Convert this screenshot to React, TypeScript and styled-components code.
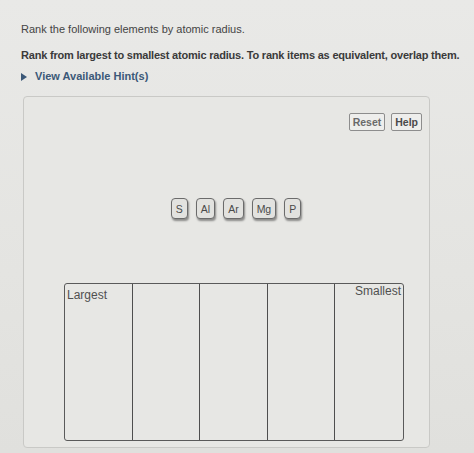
import React from "react";
import styled, { createGlobalStyle } from "styled-components";

const elements = ["S", "Al", "Ar", "Mg", "P"];
const columns = ["Largest", "", "", "", "Smallest"];

const GlobalStyle = createGlobalStyle`
  html, body {
    margin: 0;
    padding: 0;
    background: #e3e3e0;
  }
  body {
    font-family: "Liberation Sans", Arial, sans-serif;
  }
`;

const App: React.FC = () => {
  return (
    <Page>
      <GlobalStyle />
      <Intro>Rank the following elements by atomic radius.</Intro>
      <Instructions>
        Rank from largest to smallest atomic radius. To rank items as equivalent, overlap them.
      </Instructions>
      <HintToggle>
        <Arrow />
        View Available Hint(s)
      </HintToggle>

      <Panel>
        <Toolbar>
          <ToolButton>Reset</ToolButton>
          <ToolButton $strong>Help</ToolButton>
        </Toolbar>

        <TileRow>
          {elements.map((el) => (
            <Tile key={el}>{el}</Tile>
          ))}
        </TileRow>

        <RankTable>
          {columns.map((label, i) => (
            <RankColumn key={i} $last={i === columns.length - 1}>
              <ColumnLabel $right={i === columns.length - 1}>{label}</ColumnLabel>
            </RankColumn>
          ))}
        </RankTable>
      </Panel>
    </Page>
  );
};

// ---------- styles ----------

const Page = styled.div`
  width: 474px;
  height: 453px;
  box-sizing: border-box;
  padding: 22px 0 0 21px;
  background: linear-gradient(180deg, #e9e9e7 0%, #e4e4e1 60%, #e0e0dd 100%);
  overflow: hidden;
  color: #3c3c3c;
`;

const Intro = styled.p`
  margin: 0;
  font-size: 11px;
  line-height: 15px;
  color: #444;
`;

const Instructions = styled.p`
  margin: 11px 0 0 0;
  font-size: 11px;
  line-height: 15px;
  font-weight: 700;
  letter-spacing: -0.2px;
  color: #3a3a3a;
  white-space: nowrap;
`;

const HintToggle = styled.div`
  display: flex;
  align-items: center;
  gap: 8px;
  margin-top: 6px;
  font-size: 11px;
  line-height: 15px;
  font-weight: 700;
  color: #3b5878;
`;

const Arrow = styled.span`
  width: 0;
  height: 0;
  border-top: 4px solid transparent;
  border-bottom: 4px solid transparent;
  border-left: 6px solid #3b5878;
`;

const Panel = styled.div`
  margin-top: 12px;
  margin-left: 2px;
  width: 407px;
  height: 352px;
  box-sizing: border-box;
  border: 1px solid #c9c9c6;
  border-radius: 4px;
  background: #e7e7e4;
  padding: 16px 7px 0 40px;
`;

const Toolbar = styled.div`
  display: flex;
  justify-content: flex-end;
  gap: 6px;
`;

const ToolButton = styled.div<{ $strong?: boolean }>`
  height: 18px;
  padding: 0 3px;
  box-sizing: border-box;
  border: 1px solid #8d8d8d;
  border-radius: 2px;
  background: #eeeeec;
  font-size: 10.5px;
  line-height: 16px;
  font-weight: 700;
  color: ${(p) => (p.$strong ? "#4a4a4a" : "#6a6a6a")};
`;

const TileRow = styled.div`
  display: flex;
  justify-content: center;
  gap: 8px;
  margin-top: 67px;
  padding-right: 14px;
`;

const Tile = styled.div`
  min-width: 17px;
  height: 21px;
  padding: 0 4px;
  box-sizing: border-box;
  border: 1.5px solid #6b6b6b;
  border-radius: 4px;
  background: #e2e2df;
  box-shadow: 1px 2px 2px rgba(0, 0, 0, 0.4);
  display: flex;
  align-items: center;
  justify-content: center;
  font-size: 10.5px;
  color: #4a4a4a;
`;

const RankTable = styled.div`
  display: grid;
  grid-template-columns: repeat(5, 1fr);
  width: 340px;
  height: 158px;
  margin-top: 64px;
  box-sizing: border-box;
  border: 1.5px solid #5a5a5a;
  border-radius: 3px;
`;

const RankColumn = styled.div<{ $last: boolean }>`
  border-right: ${(p) => (p.$last ? "none" : "1.5px solid #4e4e4e")};
  padding: 2px 2px;
`;

const ColumnLabel = styled.div<{ $right: boolean }>`
  text-align: ${(p) => (p.$right ? "right" : "left")};
  margin-top: ${(p) => (p.$right ? "-2px" : "2px")};
  font-size: 12px;
  color: #505050;
`;

export default App;
